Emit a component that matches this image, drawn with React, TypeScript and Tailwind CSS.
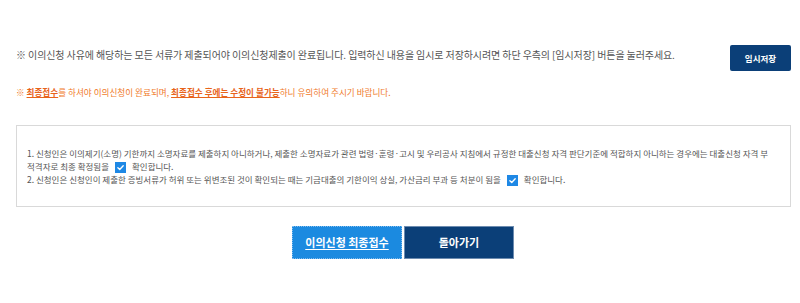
import React from 'react';

function Check() {
  return (
    <span className="inline-flex items-center justify-center w-[11px] h-[11px] bg-[#1e88e5] align-[-2px] ml-[6px] mr-[6px]">
      <svg viewBox="0 0 12 12" className="w-[9px] h-[9px]" fill="none" stroke="#fff" strokeWidth="1.8" strokeLinecap="round" strokeLinejoin="round">
        <path d="M2.5 6.2 L5 8.6 L9.6 3.6" />
      </svg>
    </span>
  );
}

export default function App() {
  return (
    <div
      className="w-[800px] h-[303px] bg-white pl-[16px] pr-[9px] pt-[45px] text-[#555]"
      style={{ fontFamily: '"Noto Sans CJK KR", "Noto Sans", sans-serif' }}
    >
      {/* notice + temp save */}
      <div className="flex items-start justify-between">
        <p className="text-[10px] leading-[20px] tracking-[-0.1px]">
          ※ 이의신청 사유에 해당하는 모든 서류가 제출되어야 이의신청제출이 완료됩니다. 입력하신 내용을 임시로 저장하시려면 하단 우측의 [임시저장] 버튼을 눌러주세요.
        </p>
        <button className="w-[61px] h-[26px] bg-[#0b3f78] text-white text-[8.5px] font-bold rounded-[2px]">임시저장</button>
      </div>

      <p className="mt-[14px] text-[8.6px] leading-[14px] text-[#f07a2a]">
        ※ <b className="underline text-[#e8641b]">최종접수</b>를 하셔야 이의신청이 완료되며,{' '}
        <b className="underline text-[#e8641b]">최종접수 후에는 수정이 불가능</b>하니 유의하여 주시기 바랍니다.
      </p>

      {/* agreement box */}
      <div className="mt-[26px] w-[775px] border border-[#d9d9d9] pl-[10px] pr-[17px] pt-[21px] pb-[20px] text-[8.5px] leading-[13px]">
        <p>
          1. 신청인은 이의제기(소명) 기한까지 소명자료를 제출하지 아니하거나, 제출한 소명자료가 관련 법령·훈령·고시 및 우리공사 지침에서 규정한 대출신청 자격 판단기준에 적합하지 아니하는 경우에는 대출신청 자격 부적격자로 최종 확정됨을
          <Check />
          확인합니다.
        </p>
        <p>
          2. 신청인은 신청인이 제출한 증빙서류가 허위 또는 위변조된 것이 확인되는 때는 기금대출의 기한이익 상실, 가산금리 부과 등 처분이 됨을
          <Check />
          확인합니다.
        </p>
      </div>

      {/* actions */}
      <div className="mt-[19px] flex justify-center gap-[2px] pr-[1px]">
        <button className="w-[110px] h-[33px] bg-[#1b8ae0] text-white text-[11px] font-bold underline underline-offset-2 outline outline-1 outline-dotted outline-[#7fbcef] -outline-offset-1">
          이의신청 최종접수
        </button>
        <button className="w-[110px] h-[33px] bg-[#0b3f78] text-white text-[11px] font-bold border border-[#6d8cb0]">
          돌아가기
        </button>
      </div>
    </div>
  );
}
